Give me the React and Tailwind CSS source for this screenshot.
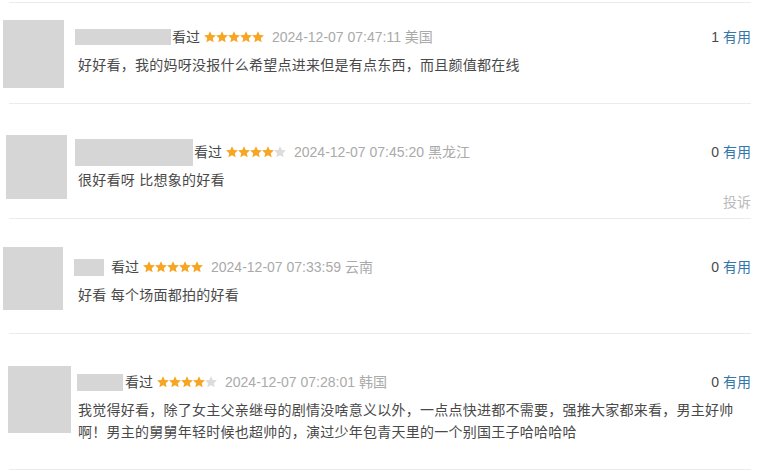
import { Fragment } from 'react'

const reviews = [
  {
    box: 'min-h-[100px] pt-[24px]',
    avatar: 'ml-[3px] mt-[-7px] w-[61px] h-[68px]',
    name: '-ml-[3px] mr-[1px] w-[96px] h-[16px]',
    stars: 5,
    time: '2024-12-07 07:47:11',
    loc: '美国',
    useful: 1,
    text: '好好看，我的妈呀没报什么希望点进来但是有点东西，而且颜值都在线',
  },
  {
    box: 'min-h-[114px] pt-[38px]',
    avatar: 'ml-[6px] mt-[-7px] w-[61px] h-[64px]',
    name: '-ml-[3px] mr-[1px] w-[118px] h-[27px]',
    stars: 4,
    time: '2024-12-07 07:45:20',
    loc: '黑龙江',
    useful: 0,
    text: '很好看呀 比想象的好看',
    report: true,
  },
  {
    box: 'min-h-[114px] pt-[38px]',
    avatar: 'ml-[3px] mt-[-10px] w-[60px] h-[63px]',
    name: '-ml-[4px] mr-[7px] w-[30px] h-[17px]',
    stars: 5,
    time: '2024-12-07 07:33:59',
    loc: '云南',
    useful: 0,
    text: '好看 每个场面都拍的好看',
  },
  {
    box: 'min-h-[135px] pt-[38px]',
    avatar: 'ml-[8px] mt-[-6px] w-[63px] h-[67px]',
    name: '-ml-[1px] mr-[2px] w-[46px] h-[17px]',
    stars: 4,
    time: '2024-12-07 07:28:01',
    loc: '韩国',
    useful: 0,
    text: '我觉得好看，除了女主父亲继母的剧情没啥意义以外，一点点快进都不需要，强推大家都来看，男主好帅啊！男主的舅舅年轻时候也超帅的，演过少年包青天里的一个别国王子哈哈哈哈',
  },
]

function Star({ on }) {
  return (
    <svg viewBox="0 0 24 24" className="w-[12px] h-[12px] block">
      <polygon
        points="12,0.3 15.5,7.8 23.8,8.7 17.6,14.3 19.3,22.6 12,18.4 4.7,22.6 6.4,14.3 0.2,8.7 8.5,7.8"
        fill={on ? '#f6a623' : '#dcdcdc'}
      />
    </svg>
  )
}

function Divider() {
  return <div className="ml-[9px] w-[742px] h-px bg-[#ececec]" />
}

export default function App() {
  return (
    <div className="w-[774px] h-[473px] bg-white pt-[2px] overflow-hidden font-['Liberation_Sans','Noto_Sans_CJK_SC',sans-serif] text-[14px] text-[#494949]">
      <Divider />
      {reviews.map((r, i) => (
        <Fragment key={i}>
          <div className={`flex ${r.box}`}>
            {/* avatar */}
            <div className="w-[78px] shrink-0">
              <div className={`bg-[#d6d6d6] ${r.avatar}`} />
            </div>

            <div className="flex-1 pr-[23px]">
              {/* header line */}
              <div className="flex items-center h-[20px] leading-[20px] whitespace-nowrap">
                <div className={`bg-[#d6d6d6] shrink-0 ${r.name}`} />
                <span>看过</span>
                <span className="flex ml-[4px] mr-[8px]">
                  {[0, 1, 2, 3, 4].map(n => <Star key={n} on={n < r.stars} />)}
                </span>
                <span className="text-[#aaaaaa]">{r.time} {r.loc}</span>
                <span className="ml-auto">
                  {r.useful} <span className="text-[#3377aa]">有用</span>
                </span>
              </div>

              {/* comment */}
              <p className="mt-[7px] mr-[12px] leading-[22px] tracking-[0.25px]">{r.text}</p>

              {r.report && <div className="text-right leading-[22px] text-[#bbbbbb]">投诉</div>}
            </div>
          </div>
          <Divider />
        </Fragment>
      ))}
    </div>
  )
}
